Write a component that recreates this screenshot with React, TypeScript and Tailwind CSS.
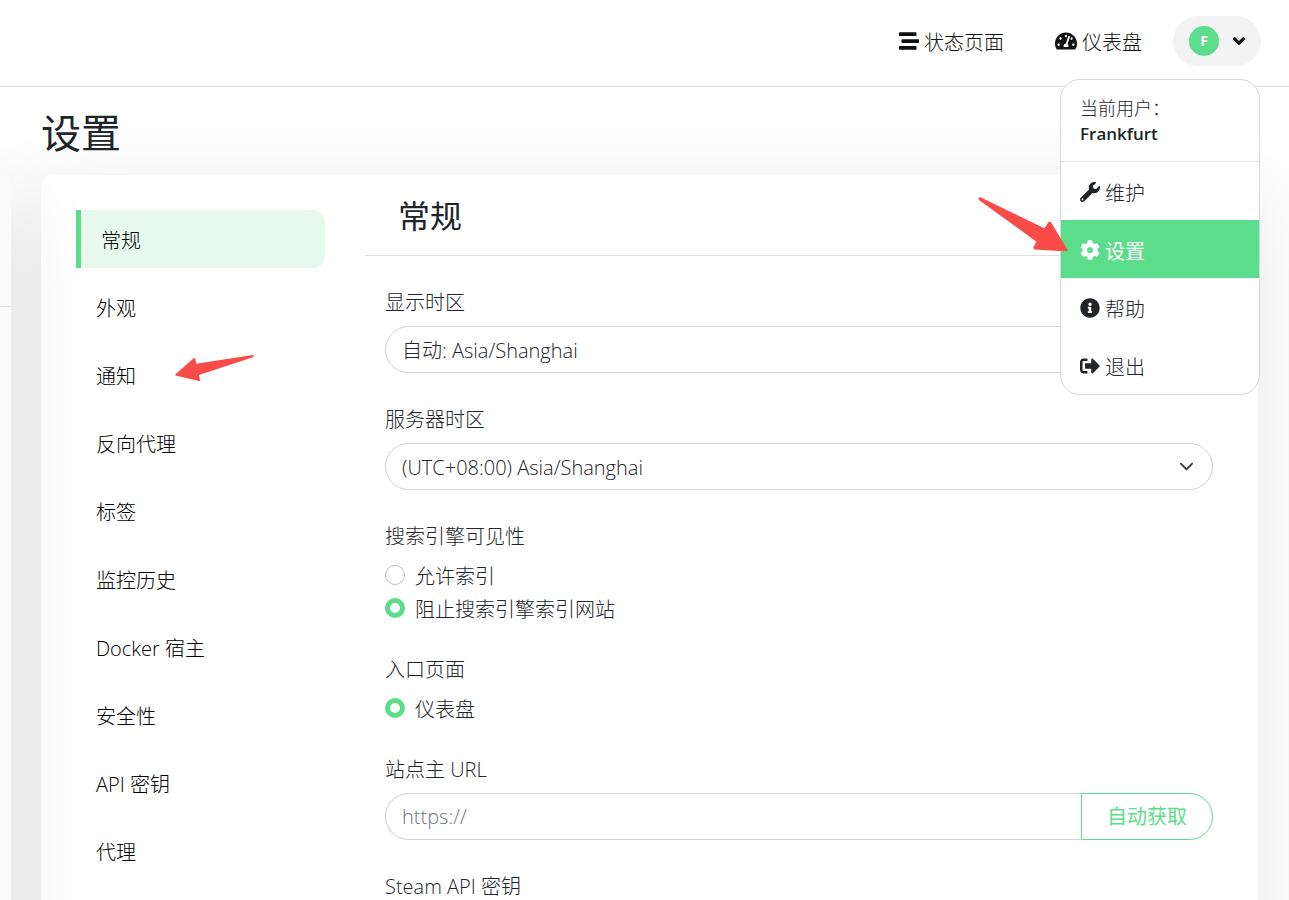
import { useState } from 'react';
import type { JSX, ReactNode } from 'react';
import clsx from 'clsx';
import {
  FaAngleDown,
  FaCog,
  FaInfoCircle,
  FaSignOutAlt,
  FaStream,
  FaTachometerAlt,
  FaWrench,
} from 'react-icons/fa';

const menuItems = [
  '常规',
  '外观',
  '通知',
  '反向代理',
  '标签',
  '监控历史',
  'Docker 宿主',
  '安全性',
  'API 密钥',
  '代理',
];

const userMenu = [
  { label: '维护', icon: FaWrench },
  { label: '设置', icon: FaCog },
  { label: '帮助', icon: FaInfoCircle },
  { label: '退出', icon: FaSignOutAlt },
];

function UserMenu(): JSX.Element {
  return (
    <div className="absolute top-full right-px z-30 mt-[13px] w-[200px]">
      <div className="overflow-hidden rounded-[20px] border border-[#d8d8d8] bg-white text-[#212529]">
        <div className="border-b border-[#e4e4e4] px-[19px] pt-[15px] pb-[14px] text-[18px] leading-[26px]">
          <div>当前用户：</div>
          <div className="text-[17px] font-semibold">Frankfurt</div>
        </div>
        <ul>
          {userMenu.map(({ label, icon: Icon }) => (
            <li key={label}>
              <a
                href="#"
                className={clsx(
                  'flex h-[58px] items-center gap-[5px] px-[19px] pt-px',
                  label === '设置' && 'bg-[#5cdd8b] font-normal text-white',
                )}
              >
                <Icon className="size-5" />
                <span className="pt-[3px] leading-[27px]">{label}</span>
              </a>
            </li>
          ))}
        </ul>
      </div>
      <svg
        viewBox="0 0 90 55"
        className="pointer-events-none absolute top-[117px] right-[192px] h-[55px] w-[90px] fill-[#f94b48]"
      >
        <path d="M2.500 1.200L66.400 32.200L70.500 26Q72 25 73.500 27L89.600 54Q90 55.500 88 55.400L57 53.600Q55 53 55.500 51L58.500 45.700L.600 3.800Q0 1 2.500 1.200Z" />
      </svg>
    </div>
  );
}

function Header(): JSX.Element {
  return (
    <header className="flex h-[87px] items-start justify-end border-b border-[#dee2e6] pt-4 pr-7 text-[#111]">
      <nav className="flex">
        <a href="#" className="mr-[51px] flex h-[50px] items-center gap-[5px]">
          <FaStream className="size-5" />
          <span className="pt-[3px]">状态页面</span>
        </a>
        <a href="#" className="mr-[31px] flex h-[50px] items-center gap-[5px]">
          <FaTachometerAlt className="h-5 w-[22px]" />
          <span className="pt-[3px]">仪表盘</span>
        </a>
      </nav>
      <div className="relative">
        <button
          type="button"
          aria-label="Frankfurt"
          className="flex h-[50px] w-[88px] items-center gap-[10px] rounded-full bg-[#f3f3f3] pl-4"
        >
          <span className="flex size-[30px] items-center justify-center rounded-full bg-[#5cdd8b] text-[14px] font-bold text-white">
            F
          </span>
          <FaAngleDown className="size-5" />
        </button>
        <UserMenu />
      </div>
    </header>
  );
}

function SettingsMenu({
  current,
  onSelect,
}: {
  current: string;
  onSelect: (item: string) => void;
}): JSX.Element {
  return (
    <ul className="relative z-20 flex w-[249px] shrink-0 flex-col gap-[10px] text-black">
      {menuItems.map((item) => (
        <li key={item} className="relative">
          <a
            href="#"
            onClick={() => onSelect(item)}
            className={clsx(
              'flex h-[58px] items-center px-5 pt-[3px]',
              item === current &&
                'rounded-r-xl border-l-[5px] border-[#5cdd8b] bg-[#e7f8ec]',
            )}
          >
            {item}
          </a>
          {item === '通知' && (
            <svg
              viewBox="0 0 80 28"
              className="pointer-events-none absolute top-2 left-[99px] h-7 w-20 fill-[#f94b48]"
            >
              <path d="M0 20.700L19 4Q20 3.500 20.300 5L21.300 9.700L78 1Q79.500 1.500 78.500 3L24 21L25 26.500Q25 27.500 24 27L.500 21.500Z" />
            </svg>
          )}
        </li>
      ))}
    </ul>
  );
}

function Field({
  label,
  htmlFor,
  children,
}: {
  label: string;
  htmlFor: string;
  children: ReactNode;
}): JSX.Element {
  return (
    <div className="mb-[30px]">
      <label htmlFor={htmlFor} className="mb-[10px] block pt-[3px] leading-[27px]">
        {label}
      </label>
      {children}
    </div>
  );
}

function Select({ id, value }: { id: string; value: string }): JSX.Element {
  return (
    <div className="relative">
      <select
        id={id}
        className="block h-[47px] w-full appearance-none rounded-full border border-[#ced4da] bg-white pt-[2px] pr-12 pl-4"
      >
        <option>{value}</option>
      </select>
      <svg
        viewBox="0 0 16 16"
        className="pointer-events-none absolute inset-y-0 right-[19px] my-auto size-[15px] fill-none stroke-[#343a40] stroke-2"
        strokeLinecap="round"
        strokeLinejoin="round"
      >
        <path d="M2 5l6 6 6-6" />
      </svg>
    </div>
  );
}

function RadioGroup({
  legend,
  name,
  options,
  initial,
}: {
  legend: string;
  name: string;
  options: string[];
  initial: string;
}): JSX.Element {
  const [value, setValue] = useState<string>(initial);

  return (
    <fieldset className="mb-[30px]">
      <legend className="mb-[10px] pt-[3px] leading-[27px]">{legend}</legend>
      <div className="flex flex-col gap-[3px]">
        {options.map((option) => (
          <label key={option} className="flex items-center gap-[10px]">
            <input
              type="radio"
              name={name}
              checked={value === option}
              onChange={() => setValue(option)}
              className="size-5 appearance-none rounded-full border border-[#bfbfbf] bg-white checked:border-[5px] checked:border-[#5cdd8b]"
            />
            <span className="pt-[3px] leading-[27px]">{option}</span>
          </label>
        ))}
      </div>
    </fieldset>
  );
}

function GeneralForm(): JSX.Element {
  return (
    <form className="pt-[30px] pr-[45px] pl-5">
      <Field label="显示时区" htmlFor="timezone">
        <Select id="timezone" value="自动: Asia/Shanghai" />
      </Field>
      <Field label="服务器时区" htmlFor="server-timezone">
        <Select id="server-timezone" value="(UTC+08:00) Asia/Shanghai" />
      </Field>
      <RadioGroup
        legend="搜索引擎可见性"
        name="searchEngineIndex"
        options={['允许索引', '阻止搜索引擎索引网站']}
        initial="阻止搜索引擎索引网站"
      />
      <RadioGroup
        legend="入口页面"
        name="entryPage"
        options={['仪表盘']}
        initial="仪表盘"
      />
      <Field label="站点主 URL" htmlFor="primary-url">
        <div className="flex h-[47px]">
          <input
            id="primary-url"
            type="text"
            placeholder="https://"
            className="min-w-0 flex-1 rounded-l-full border border-r-0 border-[#ced4da] pl-4 placeholder:text-[#6c757d]"
          />
          <button
            type="button"
            className="rounded-r-full border border-[#5cdd8b] px-[25px] pt-px font-normal text-[#5cdd8b]"
          >
            自动获取
          </button>
        </div>
      </Field>
      <Field label="Steam API 密钥" htmlFor="steam-key">
        <input
          id="steam-key"
          type="password"
          className="h-[47px] w-full rounded-full border border-[#ced4da] pl-4"
        />
      </Field>
    </form>
  );
}

export default function App(): JSX.Element {
  const [current, setCurrent] = useState<string>('常规');

  return (
    <div className="flex h-screen flex-col overflow-hidden bg-white font-['Open_Sans','Noto_Sans_CJK_SC',sans-serif] text-[20px] leading-[30px] font-light text-[#212529]">
      <Header />
      <div className="flex min-h-0 flex-1 gap-[30px] pr-[31px]">
        {/* monitor list, mostly scrolled out on the left */}
        <aside className="relative z-10 mt-[88px] -ml-[400px] h-[800px] w-[411px] shrink-0 rounded-tr-xl bg-[#fbfbfb] shadow-[0_19px_88px_rgba(0,0,0,0.1)]">
          <div className="h-[132px] border-b border-[#dee2e6]" />
        </aside>
        <main className="min-w-0 flex-1">
          <h1 className="relative z-20 pt-[22px] text-[40px] leading-[48px] font-normal">
            设置
          </h1>
          <div className="mt-[18px] flex min-h-[1100px] gap-10 rounded-xl bg-white pl-[35px] shadow-[0_19px_88px_rgba(0,0,0,0.1)]">
            <div className="pt-[35px]">
              <SettingsMenu current={current} onSelect={setCurrent} />
            </div>
            <section className="min-w-0 flex-1">
              <h2 className="border-b border-[#dee2e6] pt-[22px] pb-5 pl-[33px] text-[32px] leading-[38px] font-normal">
                {current}
              </h2>
              <GeneralForm />
            </section>
          </div>
        </main>
      </div>
    </div>
  );
}
